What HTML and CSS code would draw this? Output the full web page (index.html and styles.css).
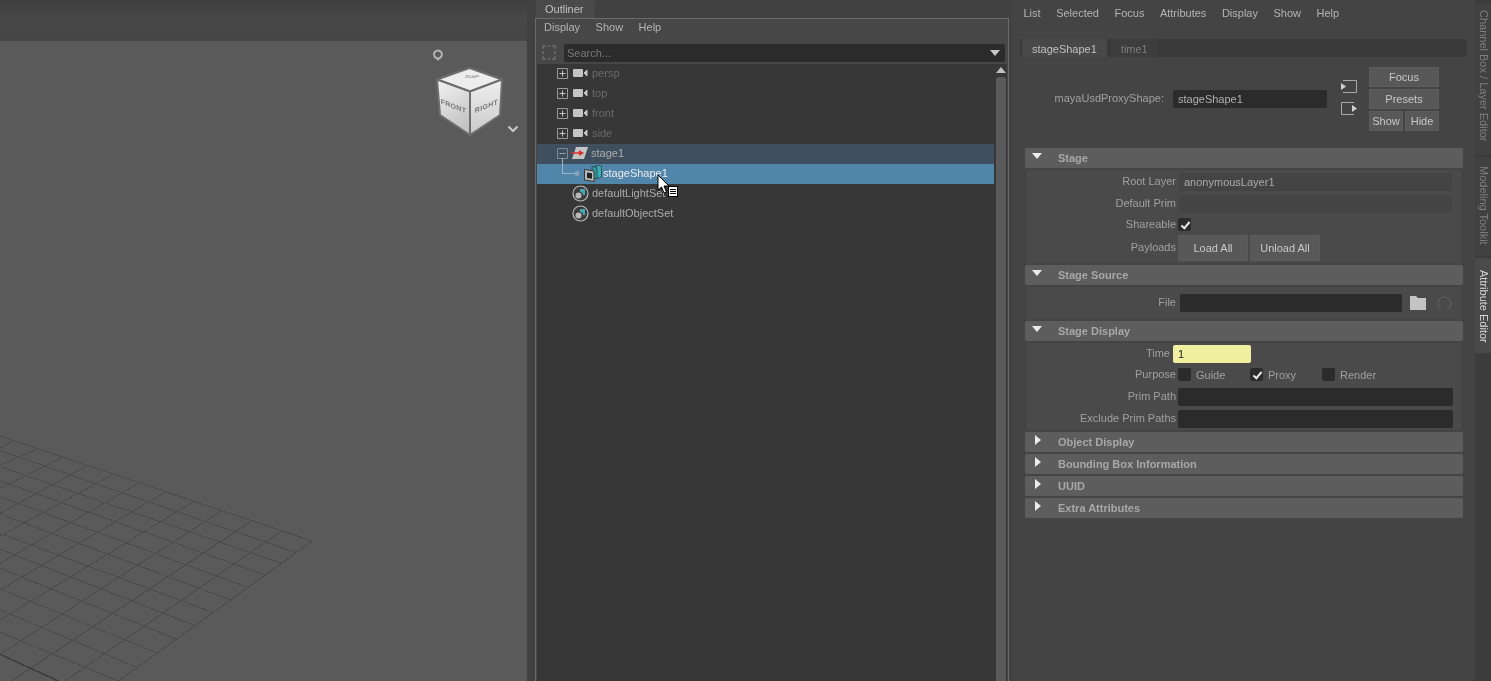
FILE: index.html
```html
<!DOCTYPE html>
<html lang="en">
<head>
	<meta charset="UTF-8">
	<title>Maya - Outliner and Attribute Editor</title>
	<link rel="stylesheet" href="styles.css">
</head>
<body>
	<svg class="defs" width="0" height="0">
		<symbol id="plus" viewBox="0 0 11 11"><path d="M.5.5h10v10H.5z" fill="none" stroke="#9a9a9a"/><path d="M2.5 5.5h6M5.5 2.5v6" stroke="#c4c4c4"/></symbol>
		<symbol id="cam" viewBox="0 0 15 10"><rect x="0" y="1" width="10" height="8" rx="1" fill="#c4c4c4"/><path d="M11 5l3-3v6z" fill="#c4c4c4" stroke="#c4c4c4"/></symbol>
		<symbol id="set" viewBox="0 0 17 17"><circle cx="8.5" cy="8.5" r="7.5" fill="#3c3c3c" stroke="#b8b8b8" stroke-width="1.2"/><path d="M8 4h5v6h-2a3 3 0 0 0-3-3z" fill="#46a8b0"/><circle cx="6.5" cy="10.5" r="3" fill="#b8b8b8"/></symbol>
	</svg>

	<div class="viewport-pane">
		<div class="viewport-top"></div>
		<div class="view">
			<svg class="grid" width="330" height="261" viewBox="0 0 990 783">
				<path class="grid-lines" d="M937 363L355 783M845 333L195 783M755 303L35 783M665 272L0 703M580 245L0 600M495 217L0 510M415 190L0 430M335 165L0 348M260 138L0 280M185 113L0 205M110 88L0 135M40 62L0 85M937 363L0 48M888 398L0 92M845 430L0 140M795 465L0 182M743 502L0 230M692 540L0 282M640 578L0 340M585 617L0 388M528 657L0 445M470 698L0 507M410 742L0 570M355 783L0 637"/>
				<path class="grid-axis" d="M0 703L175 783"/>
			</svg>
			<svg class="viewcube" width="100" height="95" viewBox="425 46 100 95">
				<defs>
					<linearGradient id="faceL" x1="0" y1="0" x2="0.3" y2="1"><stop offset="0" stop-color="#f2f2f2"/><stop offset="1" stop-color="#c4c4c4"/></linearGradient>
					<linearGradient id="faceR" x1="0" y1="0" x2="0" y2="1"><stop offset="0" stop-color="#f0f0f0"/><stop offset="1" stop-color="#c8c8c8"/></linearGradient>
				</defs>
				<path d="M438 50.500a4 4 0 1 1-.1 0" fill="none" stroke="#b4b4b4" stroke-width="2"/>
				<path d="M435.500 58l2.500 3 2.500-3z" fill="#b4b4b4"/>
				<path d="M469.500 68L502 79.500 470 91.500 437 79.500z" fill="#ededed" stroke="#6e6e6e" stroke-width="2" stroke-linejoin="round"/>
				<path d="M437 79.500L470 91.500V135L440 115z" fill="url(#faceL)" stroke="#6e6e6e" stroke-width="2" stroke-linejoin="round"/>
				<path d="M502 79.500L470 91.500V135L500 115z" fill="url(#faceR)" stroke="#6e6e6e" stroke-width="2" stroke-linejoin="round"/>
				<text class="cube-text" transform="translate(453.500 108.500) skewY(21)" text-anchor="middle">FRONT</text>
				<text class="cube-text" transform="translate(486.500 108.500) skewY(-21)" text-anchor="middle">RIGHT</text>
				<text class="cube-top" transform="translate(470 78) scale(1 .5) skewX(-30)" text-anchor="middle">TOP</text>
				<path d="M508.500 126.500l4.500 4.500 4.500-4.500" fill="none" stroke="#c8c8c8" stroke-width="2"/>
			</svg>
		</div>
	</div>

	<div class="outliner-pane">
		<div class="outliner-tab">Outliner</div>
		<div class="outliner">
			<div class="menu menu-outliner"><span>Display</span><span>Show</span><span>Help</span></div>
			<div class="search-row">
				<svg class="sel-icon" width="14" height="15" viewBox="0 0 14 15"><path d="M4 1H1v3M10 1h3v3M4 14H1v-3M10 14h3v-3M1 6v3M13 6v3M6 1h2M6 14h2" fill="none" stroke="#6c6c6c" stroke-width="1.500"/></svg>
				<div class="search-field">
					<span>Search...</span>
					<svg width="10" height="6" viewBox="0 0 10 6"><path d="M0 0h10L5 6z" fill="#c8c8c8"/></svg>
				</div>
			</div>
			<div class="list-wrap">
				<div class="rows">
					<div class="row dim"><svg class="exp" width="11" height="11"><use href="#plus"/></svg><svg class="cam" width="15" height="10"><use href="#cam"/></svg>persp</div>
					<div class="row dim"><svg class="exp" width="11" height="11"><use href="#plus"/></svg><svg class="cam" width="15" height="10"><use href="#cam"/></svg>top</div>
					<div class="row dim"><svg class="exp" width="11" height="11"><use href="#plus"/></svg><svg class="cam" width="15" height="10"><use href="#cam"/></svg>front</div>
					<div class="row dim"><svg class="exp" width="11" height="11"><use href="#plus"/></svg><svg class="cam" width="15" height="10"><use href="#cam"/></svg>side</div>
					<div class="row parent-sel">
						<svg class="exp" width="11" height="11" viewBox="0 0 11 11"><path d="M.5.5h10v10H.5z" fill="none" stroke="#7e8a96"/><path d="M2.5 5.500h6" stroke="#9aa4ae"/></svg>
						<svg class="stage-icon" width="17" height="12" viewBox="0 0 17 12"><path d="M5 0h12l-4 12H1z" fill="#c4c4c4"/><path d="M0 6h9" stroke="#d8322e" stroke-width="1.500"/><path d="M8 3l5 3-5 3z" fill="#d8322e"/></svg>
						stage1
					</div>
					<div class="row selected">
						<svg class="tree" width="22" height="26" viewBox="0 0 22 26"><path d="M.5 0v15.500H13" fill="none" stroke="#9bb4c6"/><circle cx="15" cy="15.500" r="2.500" fill="#86a4b8"/></svg>
						<svg class="shape-icon" width="18" height="17" viewBox="0 0 18 17"><path d="M12 0l5.500 1v11L12 13.500z" fill="#39b0b8" stroke="#222" stroke-width=".6"/><path d="M8 1.500l5 .8v11l-5 1.500z" fill="#2f9aa4" stroke="#222" stroke-width=".6"/><path d="M.5 4.500l9.500 1.500v10.500L.5 15z" fill="#bbb" stroke="#333"/><path d="M3 7.500l5 .7v5.500l-5-.7z" fill="#222"/></svg>
						stageShape1
					</div>
					<div class="row set-row"><svg class="set" width="17" height="17"><use href="#set"/></svg>defaultLightSet</div>
					<div class="row set-row"><svg class="set" width="17" height="17"><use href="#set"/></svg>defaultObjectSet</div>
				</div>
				<div class="scrollbar">
					<svg width="10" height="6" viewBox="0 0 10 6"><path d="M5 0l5 6H0z" fill="#c0c0c0"/></svg>
					<div class="scroll-thumb"></div>
				</div>
			</div>
		</div>
		<svg class="cursor" width="22" height="24" viewBox="0 0 22 24">
			<path d="M1 1v15l3.500-3 2.500 6 2.500-1-2.500-6h5z" fill="#fff" stroke="#000"/>
			<rect x="11.500" y="12.500" width="9" height="10" fill="#fff" stroke="#000"/>
			<path d="M13 15.500h6M13 17.500h6M13 19.500h6" stroke="#000"/>
		</svg>
	</div>

	<div class="ae-pane">
		<div class="menu menu-ae"><span>List</span><span>Selected</span><span>Focus</span><span>Attributes</span><span>Display</span><span>Show</span><span>Help</span></div>
		<div class="node-tabs">
			<div class="node-tab active">stageShape1</div>
			<div class="node-tab">time1</div>
		</div>
		<div class="node-head">
			<span class="node-label">mayaUsdProxyShape:</span>
			<div class="field node-field">stageShape1</div>
			<div class="node-arrows">
				<svg width="16" height="13" viewBox="0 0 16 13"><path d="M2 .5h13.500v12H2" fill="none" stroke="#a8a8a8"/><path d="M0 3l5 3.500L0 10z" fill="#d0d0d0"/></svg>
				<svg width="16" height="13" viewBox="0 0 16 13"><path d="M13 .5H.5v12H13" fill="none" stroke="#a8a8a8"/><path d="M11 3l5 3.500L11 10z" fill="#d0d0d0"/></svg>
			</div>
			<div class="node-btns">
				<div class="btn">Focus</div>
				<div class="btn">Presets</div>
				<div class="btn-pair"><div class="btn">Show</div><div class="btn">Hide</div></div>
			</div>
		</div>

		<div class="sections">
			<div class="sec-head"><i class="tri-down"></i>Stage</div>
			<div class="sec-body stage-body">
				<div class="form-row"><span class="lbl">Root Layer</span><div class="field off">anonymousLayer1</div></div>
				<div class="form-row"><span class="lbl">Default Prim</span><div class="field off"></div></div>
				<div class="form-row check-row"><span class="lbl">Shareable</span><div class="check on"></div></div>
				<div class="form-row payload-row"><span class="lbl">Payloads</span><div class="btn wide">Load All</div><div class="btn wide">Unload All</div></div>
			</div>

			<div class="sec-head"><i class="tri-down"></i>Stage Source</div>
			<div class="sec-body source-body">
				<div class="form-row"><span class="lbl">File</span><div class="field file-field"></div>
					<svg class="folder" width="16" height="14" viewBox="0 0 16 14"><path d="M0 0h6l2 2h8v12H0z" fill="#c4c4c4"/></svg>
					<svg class="reload" width="15" height="15" viewBox="0 0 15 15"><path d="M4 13a6.500 6.500 0 1 1 7 0" fill="none" stroke="#5e5e5e" stroke-width="1.200"/></svg>
				</div>
			</div>

			<div class="sec-head"><i class="tri-down"></i>Stage Display</div>
			<div class="sec-body display-body">
				<div class="form-row time-row"><span class="lbl">Time</span><div class="field time-field">1</div></div>
				<div class="form-row check-row purpose-row">
					<span class="lbl">Purpose</span>
					<div class="opt"><div class="check"></div>Guide</div>
					<div class="opt"><div class="check on"></div>Proxy</div>
					<div class="opt"><div class="check"></div>Render</div>
				</div>
				<div class="form-row"><span class="lbl">Prim Path</span><div class="field path-field"></div></div>
				<div class="form-row"><span class="lbl">Exclude Prim Paths</span><div class="field path-field"></div></div>
			</div>

			<div class="sec-head closed"><i class="tri-right"></i>Object Display</div>
			<div class="sec-head closed"><i class="tri-right"></i>Bounding Box Information</div>
			<div class="sec-head closed"><i class="tri-right"></i>UUID</div>
			<div class="sec-head closed"><i class="tri-right"></i>Extra Attributes</div>
		</div>
	</div>

	<div class="side-tabs">
		<div class="side-tab channel"><span>Channel Box / Layer Editor</span></div>
		<div class="side-tab modeling"><span>Modeling Toolkit</span></div>
		<div class="side-tab active"><span>Attribute Editor</span></div>
		<div class="side-rest"></div>
	</div>
</body>
</html>
```

FILE: styles.css
```css
html, body {
	height: 100%;
	margin: 0;
	overflow: hidden;
}
body {
	display: flex;
	background-color: #414141;
	color: #acacac;
	font-family: "Liberation Sans", Arial, sans-serif;
	font-size: 11px;
}
.defs {
	position: absolute;
}
svg {
	display: block;
	flex: none;
}
/* grey text edges, no colour fringes */
.outliner-pane, .ae-pane, .side-tabs {
	will-change: transform;
}

/* viewport */
.viewport-pane {
	width: 527px;
	margin-right: 6px;
	display: flex;
	flex-direction: column;
	flex: none;
}
.viewport-top {
	height: 41px;
	flex: none;
	background: linear-gradient(#3f3f3f, #484848 50%, #454545);
}
.view {
	flex: 1;
	position: relative;
	background-color: #5a5a5a;
	overflow: hidden;
}
.grid {
	position: absolute;
	left: 0;
	bottom: 0;
	shape-rendering: crispEdges;
}
.grid-lines {
	fill: none;
	stroke: #4b4b4b;
	stroke-width: 3;
}
.grid-axis {
	fill: none;
	stroke: #3f3f3f;
	stroke-width: 5;
}
.viewcube {
	position: absolute;
	left: 425px;
	top: 5px;
	filter: blur(.3px);
}
.cube-text {
	font-size: 7px;
	font-weight: bold;
	fill: #767676;
	letter-spacing: .3px;
}
.cube-top {
	font-size: 7px;
	font-weight: bold;
	fill: #8a8a8a;
}

/* outliner */
.outliner-pane {
	width: 479px;
	flex: none;
	position: relative;
	display: flex;
	flex-direction: column;
}
.outliner-tab {
	width: 50px;
	height: 18px;
	line-height: 18px;
	margin-left: 3px;
	padding-left: 9px;
	background-color: #4a4a4a;
	border-radius: 2px 2px 0 0;
	color: #c0c0c0;
}
.outliner {
	flex: 1;
	width: 472px;
	margin-left: 2px;
	border: 1px solid #6a6a6a;
	border-bottom: 0;
	display: flex;
	flex-direction: column;
	background-color: #474747;
}
.menu {
	display: flex;
	gap: 15.5px;
	color: #b4b4b4;
}
.menu-outliner {
	height: 23px;
	line-height: 16px;
	padding-left: 8px;
	flex: none;
}
.search-row {
	height: 22px;
	flex: none;
	display: flex;
	padding-left: 6px;
}
.sel-icon {
	margin: 3px 8px 0 0;
}
.search-field {
	width: 441px;
	height: 18px;
	margin-top: 2px;
	display: flex;
	align-items: center;
	justify-content: space-between;
	padding: 0 5px 0 3px;
	box-sizing: border-box;
	background-color: #2b2b2b;
	border-radius: 2px;
	color: #7a7a7a;
}
.list-wrap {
	flex: 1;
	display: flex;
	margin: 0 1px;
	background-color: #373737;
}
.rows {
	width: 457px;
	flex: none;
}
.row {
	height: 20px;
	box-sizing: border-box;
	padding-bottom: 2px;
	display: flex;
	align-items: center;
	padding-left: 20px;
	color: #acacac;
	white-space: nowrap;
}
.row.dim {
	color: #6a6a6a;
}
.exp {
	margin-right: 5px;
}
.cam {
	margin-right: 4px;
}
.parent-sel {
	background-color: #404f5e;
}
.parent-sel .exp {
	margin-right: 3px;
}
.stage-icon {
	margin-right: 3px;
}
.selected {
	background-color: #5285aa;
	color: #ececec;
	padding-left: 25px;
	position: relative;
}
.tree {
	position: absolute;
	left: 25px;
	top: -6px;
}
.shape-icon {
	margin: 0 1px 0 22px;
}
.set-row {
	padding-left: 35px;
}
.set {
	margin-right: 3px;
}
.scrollbar {
	width: 10px;
	margin-left: 2px;
	display: flex;
	flex-direction: column;
}
.scrollbar svg {
	margin-top: 3px;
}
.scroll-thumb {
	flex: 1;
	margin-top: 4px;
	background-color: #5a5a5a;
	border-radius: 3px 3px 0 0;
}
.cursor {
	position: absolute;
	left: 124px;
	top: 174px;
}

/* attribute editor */
.ae-pane {
	width: 463px;
	flex: none;
	background-color: #444444;
}
.menu-ae {
	height: 39px;
	padding: 7px 0 0 11.5px;
	box-sizing: border-box;
}
.node-tabs {
	height: 18px;
	margin: 0 8px;
	width: 447px;
	display: flex;
	gap: 4px;
	padding-left: 2px;
	box-sizing: border-box;
	background-color: #3a3a3a;
}
.node-tab {
	line-height: 21px;
	padding: 0 10px;
	background-color: #3d3d3d;
	color: #7c7c7c;
	border-radius: 2px 2px 0 0;
}
.node-tab.active {
	background-color: #484848;
	color: #c0c0c0;
}
.node-head {
	height: 84px;
	margin-bottom: 7px;
	display: flex;
	align-items: center;
}
.node-label {
	width: 152px;
	margin-bottom: 2px;
	text-align: right;
	color: #a0a0a0;
}
.field {
	height: 18px;
	line-height: 18px;
	box-sizing: border-box;
	padding-left: 5px;
	background-color: #2b2b2b;
	border-radius: 2px;
	color: #b0b0b0;
}
.node-field {
	width: 154px;
	margin-left: 9px;
}
.node-arrows {
	display: flex;
	flex-direction: column;
	gap: 9px;
	margin: -3px 12px 0 14px;
}
.node-btns {
	width: 70px;
	display: flex;
	flex-direction: column;
	gap: 2px;
}
.btn {
	height: 20px;
	line-height: 20px;
	text-align: center;
	background-color: #585858;
	color: #c8c8c8;
	box-shadow: inset 0 0 0 1px #5c5c5c;
}
.btn-pair {
	display: flex;
	gap: 2px;
}
.btn-pair .btn {
	flex: 1;
}
.sections {
	margin-left: 13px;
	width: 438px;
}
.sec-head {
	height: 20px;
	line-height: 20px;
	padding-left: 33px;
	position: relative;
	background-color: #5d5d5d;
	border-radius: 2px;
	font-weight: bold;
	color: #a8a8a8;
}
.closed {
	margin-bottom: 2px;
}
.tri-down {
	position: absolute;
	left: 7px;
	top: 5px;
	border-left: 5.5px solid transparent;
	border-right: 5.5px solid transparent;
	border-top: 6px solid #ececec;
}
.tri-right {
	position: absolute;
	left: 10px;
	top: 3px;
	border-top: 5.5px solid transparent;
	border-bottom: 5.5px solid transparent;
	border-left: 6px solid #ececec;
}
.sec-body {
	margin: 2px;
	background-color: #4a4a4a;
	box-sizing: border-box;
	padding-top: 3px;
}
.stage-body {
	height: 93px;
}
.source-body {
	height: 32px;
	padding-top: 7px;
}
.display-body {
	height: 87px;
	padding-top: 2px;
}
.form-row {
	height: 18px;
	margin-bottom: 4px;
	display: flex;
	align-items: center;
	color: #a0a0a0;
}
.lbl {
	width: 149px;
	margin-right: 3px;
	flex: none;
	text-align: right;
	position: relative;
	top: -1px;
}
.form-row .off {
	width: 273px;
	background-color: #444444;
	color: #aaaaaa;
}
.check-row {
	height: 15px;
	margin-bottom: 3px;
}
.check {
	width: 13px;
	height: 13px;
	position: relative;
	background-color: #2b2b2b;
	border-radius: 2px;
	margin-left: -1px;
}
.check.on::after {
	content: "";
	position: absolute;
	left: 4.500px;
	top: 1.500px;
	width: 3px;
	height: 7px;
	border: solid #e8e8e8;
	border-width: 0 2px 2px 0;
	transform: rotate(40deg);
}
.payload-row {
	height: 26px;
	gap: 2px;
	margin-bottom: 0;
}
.payload-row .lbl {
	margin-right: 0;
}
.wide {
	width: 70px;
	height: 26px;
	line-height: 26px;
}
.file-field {
	width: 222px;
	margin-left: 1px;
}
.folder {
	margin-left: 8px;
}
.reload {
	margin-left: 11px;
}
.time-row .lbl {
	width: 143px;
}
.time-field {
	width: 78px;
	background-color: #f0f0a0;
	color: #222;
}
.purpose-row {
	margin-bottom: 6px;
}
.opt {
	width: 72px;
	display: flex;
	align-items: center;
	gap: 5px;
}
.path-field {
	width: 275px;
	margin-left: -1px;
}

/* docked tabs on the far right */
.side-tabs {
	flex: 1;
	display: flex;
	flex-direction: column;
	background-color: #3c3c3c;
	padding-top: 3px;
}
.side-tab {
	writing-mode: vertical-rl;
	display: flex;
	align-items: center;
	background-color: #414141;
	border-radius: 0 3px 3px 0;
	color: #7e7e7e;
	padding-top: 7px;
	padding-left: 1px;
	box-sizing: border-box;
	flex: none;
}
.channel {
	height: 152px;
	margin-bottom: 2px;
}
.modeling {
	height: 99px;
	margin-bottom: 2px;
	padding-top: 9px;
}
.side-tab.active {
	height: 95px;
	background-color: #4a4a4a;
	color: #d8d8d8;
	padding-top: 12px;
}
```
